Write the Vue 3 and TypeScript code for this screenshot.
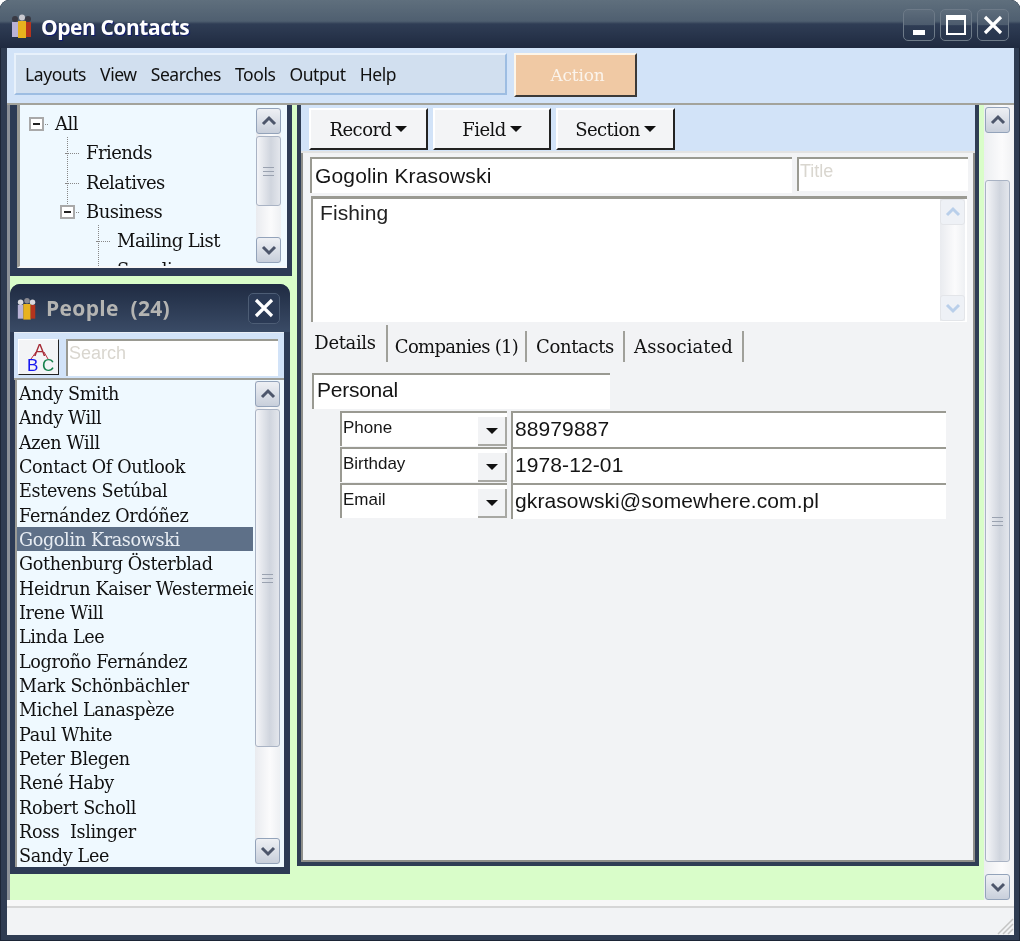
<script setup lang="ts">
interface TreeRow { label: string; depth: number; expander: boolean }
interface TabItem { label: string; width: number; spacing: number }
const tree: TreeRow[] = [
  { label: 'All', depth: 0, expander: true },
  { label: 'Friends', depth: 1, expander: false },
  { label: 'Relatives', depth: 1, expander: false },
  { label: 'Business', depth: 1, expander: true },
  { label: 'Mailing List', depth: 2, expander: false },
  { label: 'Suppliers', depth: 2, expander: false },
]
const people: string[] = [
  'Andy Smith', 'Andy Will', 'Azen Will', 'Contact Of Outlook', 'Estevens Setúbal',
  'Fernández Ordóñez', 'Gogolin Krasowski', 'Gothenburg Österblad', 'Heidrun Kaiser Westermeier',
  'Irene Will', 'Linda Lee', 'Logroño Fernández', 'Mark Schönbächler', 'Michel Lanaspèze',
  'Paul White', 'Peter Blegen', 'René Haby', 'Robert Scholl', 'Ross  Islinger', 'Sandy Lee',
]
const selected = 'Gogolin Krasowski'
const peopleTitle = 'People  (24)'
const menus: string[] = ['Layouts', 'View', 'Searches', 'Tools', 'Output', 'Help']
const tools: string[] = ['Record', 'Field', 'Section']
const tabs: TabItem[] = [
  { label: 'Details', width: 78, spacing: -0.35 },
  { label: 'Companies (1)', width: 137, spacing: -0.7 },
  { label: 'Contacts', width: 96, spacing: -0.35 },
  { label: 'Associated', width: 117, spacing: 0.05 },
]
const fields = [
  { type: 'Phone', value: '88979887' },
  { type: 'Birthday', value: '1978-12-01' },
  { type: 'Email', value: 'gkrasowski@somewhere.com.pl' },
]
</script>

<template>
  <div class="window">
    <header class="titlebar">
      <svg class="app-icon" width="24" height="26" viewBox="0 0 24 26">
        <circle cx="5" cy="5" r="3" fill="#3a3a44" /><circle cx="12" cy="3.5" r="3" fill="#c9c9d0" /><circle cx="18" cy="5" r="3" fill="#3a3a44" />
        <rect x="2" y="8" width="6" height="15" fill="#b9b3d6" />
        <rect x="8" y="7" width="8" height="17" fill="#e7b21e" />
        <rect x="16" y="8" width="5" height="15" fill="#b5341d" />
      </svg>
      <span class="app-title">Open Contacts</span>
      <div class="win-btns">
        <div class="win-btn"><span class="glyph-min"></span></div>
        <div class="win-btn"><span class="glyph-max"></span></div>
        <div class="win-btn">
          <svg width="22" height="22" viewBox="0 0 22 22"><path d="M3 3 19 19M19 3 3 19" stroke="#fff" stroke-width="3.2" /></svg>
        </div>
      </div>
    </header>

    <div class="menuband">
      <nav class="menubar"><span v-for="m in menus" :key="m">{{ m }}</span></nav>
      <div class="action">Action</div>
    </div>

    <div class="content">
      <aside class="left">
        <section class="tree-panel">
          <div class="tree-body">
            <div class="tree-list">
              <div class="vline vline-a"></div>
              <div class="vline vline-b"></div>
              <div
                v-for="r in tree"
                :key="r.label"
                class="tree-row"
                :style="{ paddingLeft: 35 + r.depth * 31 + 'px' }"
              >
                <span class="hdots" :style="{ left: 14 + r.depth * 31 + 'px' }"></span>
                <span v-if="r.expander" class="expander" :style="{ left: 9 + r.depth * 31 + 'px' }"></span>
                {{ r.label }}
              </div>
            </div>
            <div class="sb sb-tree">
              <div class="sb-btn"><svg width="18" height="12" viewBox="0 0 18 12"><path d="M3 9 9 3l6 6" class="chev" /></svg></div>
              <div class="sb-thumb thumb-tree"><i></i></div>
              <div class="sb-fill"></div>
              <div class="sb-btn"><svg width="18" height="12" viewBox="0 0 18 12"><path d="M3 3l6 6 6-6" class="chev" /></svg></div>
            </div>
          </div>
        </section>

        <section class="people-panel">
          <div class="people-head">
            <svg class="app-icon small" width="22" height="25" viewBox="0 0 24 26">
              <circle cx="5" cy="5" r="3" fill="#d9d9dd" /><circle cx="12" cy="3.5" r="3" fill="#8a8a90" /><circle cx="18" cy="5" r="3" fill="#d9d9dd" />
              <rect x="2" y="8" width="6" height="15" fill="#b9b3d6" />
              <rect x="8" y="7" width="8" height="17" fill="#e7b21e" />
              <rect x="16" y="8" width="5" height="15" fill="#b5341d" />
            </svg>
            <span class="people-title">{{ peopleTitle }}</span>
            <div class="people-close">
              <svg width="22" height="22" viewBox="0 0 22 22"><path d="M3 3 19 19M19 3 3 19" stroke="#fff" stroke-width="3.2" /></svg>
            </div>
          </div>
          <div class="people-tools">
            <div class="abc">
              <svg width="39" height="34" viewBox="0 0 39 34">
                <path d="M17 12 12 19M25 12 29 19" stroke="#b83040" fill="none" stroke-width="1" />
                <text x="15" y="16" class="abc-t" fill="#a52a35">A</text>
                <text x="8" y="31" class="abc-t" fill="#1515f0">B</text>
                <text x="23" y="31" class="abc-t" fill="#15804a">C</text>
              </svg>
            </div>
            <div class="input search">Search</div>
          </div>
          <div class="people-body">
            <ul class="people-list">
              <li v-for="p in people" :key="p" :class="{ sel: p === selected }">{{ p }}</li>
            </ul>
            <div class="sb sb-people">
              <div class="sb-btn"><svg width="18" height="12" viewBox="0 0 18 12"><path d="M3 9 9 3l6 6" class="chev" /></svg></div>
              <div class="sb-thumb thumb-people"><i></i></div>
              <div class="sb-fill"></div>
              <div class="sb-btn"><svg width="18" height="12" viewBox="0 0 18 12"><path d="M3 3l6 6 6-6" class="chev" /></svg></div>
            </div>
          </div>
        </section>
      </aside>

      <main class="main">
        <div class="toolbar">
          <button v-for="t in tools" :key="t" class="tool" type="button">{{ t }}<span class="caret"></span></button>
        </div>
        <div class="name-row">
          <div class="input name">Gogolin Krasowski</div>
          <div class="input title-in">Title</div>
        </div>
        <div class="notes">
          <div class="notes-text">Fishing</div>
          <div class="sb sb-notes">
            <div class="sb-btn pale"><svg width="18" height="12" viewBox="0 0 18 12"><path d="M3 9 9 3l6 6" class="chev pale-c" /></svg></div>
            <div class="sb-fill"></div>
            <div class="sb-btn pale"><svg width="18" height="12" viewBox="0 0 18 12"><path d="M3 3l6 6 6-6" class="chev pale-c" /></svg></div>
          </div>
        </div>
        <div class="tabs">
          <div
            v-for="(t, i) in tabs"
            :key="t.label"
            class="tab"
            :class="{ active: i === 0 }"
            :style="{ width: t.width + 'px', letterSpacing: t.spacing + 'px' }"
          >{{ t.label }}</div>
        </div>
        <div class="details">
          <div class="input section-in">Personal</div>
          <div v-for="f in fields" :key="f.type" class="field">
            <div class="select">
              <span class="select-text">{{ f.type }}</span>
              <span class="select-btn"><span class="caret dark"></span></span>
            </div>
            <div class="input value">{{ f.value }}</div>
          </div>
        </div>
      </main>

      <div class="sb sb-main">
        <div class="sb-btn"><svg width="18" height="12" viewBox="0 0 18 12"><path d="M3 9 9 3l6 6" class="chev" /></svg></div>
        <div class="sb-thumb thumb-main"><i></i></div>
        <div class="sb-btn"><svg width="18" height="12" viewBox="0 0 18 12"><path d="M3 3l6 6 6-6" class="chev" /></svg></div>
      </div>
    </div>

    <footer class="status">
      <svg class="grip" width="20" height="20" viewBox="0 0 20 20">
        <path d="M19 4 4 19M19 9 9 19M19 14 14 19" stroke="#c4c4c4" stroke-width="1.5" />
      </svg>
    </footer>
  </div>
</template>

<style>
html, body { margin: 0; background: #fff; }
</style>

<style scoped>
* { box-sizing: border-box; }
.window {
  width: 1020px; height: 941px; display: flex; flex-direction: column;
  background: #2f3c52; padding: 0 6px 6px 7px;
  border-radius: 9px 9px 0 0; overflow: hidden;
  box-shadow: inset 0 0 0 1px #1c2536;
  filter: blur(0.45px);
}
.titlebar {
  height: 48px; margin: 0 -6px 0 -7px; padding: 2px 11px 0 10px; display: flex; align-items: center;
  background: linear-gradient(#5f6f7d 0, #4f5f70 44%, #2f3d55 50%, #1f2a40 100%);
}
.app-icon { margin-top: 3px; }
.app-title {
  margin: 3px 0 0 7px; color: #fff; font: bold 21px "Open Sans", sans-serif; letter-spacing: -.45px;
  text-shadow: 1px 1px 1px #101a70;
}
.win-btns { margin-left: auto; display: flex; gap: 5px; }
.win-btn {
  width: 32px; height: 32px; border-radius: 5px; border: 1px solid #6d7a88;
  background: linear-gradient(#5d6c7b 0, #4c5b6d 50%, #2e3c54 52%, #28354c 100%);
  display: flex; align-items: center; justify-content: center; position: relative;
}
.glyph-min { width: 12px; height: 5px; background: #fff; margin: 14px 0 0 -1px; }
.glyph-max { width: 20px; height: 20px; border: 2px solid #fff; border-top-width: 5px; }

.menuband {
  height: 57px; background: #d2e3f8; border-bottom: 2px solid #a3a39b;
  display: flex; align-items: flex-start; padding: 5px 0 0 7px; gap: 7px;
}
.menubar {
  width: 493px; height: 42px; display: flex; align-items: center; gap: 14px; padding: 0 0 0 9px;
  background: #d1dfef; border: 2px solid; border-color: #e8f1fb #9dbde2 #9dbde2 #e8f1fb;
  font: 17.5px "Noto Sans", sans-serif; letter-spacing: -.42px; color: #111;
}
.action {
  width: 123px; height: 44px; display: flex; align-items: center; justify-content: center; padding-left: 4px;
  background: #f0c9a4; border: 2px solid; border-color: #fdf6ea #3c3a38 #3c3a38 #fdf6ea;
  color: #fbf4ec; font: 17px "DejaVu Serif", serif; letter-spacing: -.2px;
}

.content {
  flex: 1; min-height: 0; background: #d9fdc9; display: flex; align-items: stretch;
  border-left: 3px solid #8b9098;
}
.left { width: 282px; flex: none; display: flex; flex-direction: column; gap: 8px; }

.tree-panel {
  height: 171px; background: #2d3b55; padding: 0 5px 8px 7px; width: 282px;
}
.tree-body {
  height: 163px; background: #eff9ff; border-left: 3px solid #9a9a95; display: flex; padding-right: 6px;
  border-bottom: 2px solid #f8f8f8;
}
.tree-list { flex: 1; position: relative; overflow: hidden; padding-top: 4px; }
.tree-row {
  height: 29.3px; font: 18px/29px "DejaVu Serif", serif; letter-spacing: -.55px;
  color: #111; position: relative; white-space: nowrap;
}
.hdots { position: absolute; top: 15px; width: 14px; border-top: 1px dotted #888; }
.expander {
  position: absolute; top: 8px; width: 15px; height: 14px; background: #fff; border: 2px solid #a9a9a9;
}
.expander::after { content: ""; position: absolute; left: 2px; right: 2px; top: 4px; height: 2px; background: #222; }
.vline { position: absolute; border-left: 1px dotted #888; }
.vline-a { left: 47px; top: 32px; height: 69px; }
.vline-b { left: 78px; top: 120px; height: 45px; }

.sb {
  width: 25px; flex: none; display: flex; flex-direction: column; gap: 2px;
  background: linear-gradient(90deg, #e9ebef, #fbfbfc 60%, #eef0f3);
}
.sb-btn {
  height: 26px; flex: none; border: 1px solid #93a3ba; border-radius: 3px;
  background: linear-gradient(#eef0f4, #c8cfdb); display: flex; align-items: center; justify-content: center;
}
.chev { fill: none; stroke: #4d566b; stroke-width: 3; }
.sb-thumb {
  flex: none; border: 1px solid #a9b3c4; border-radius: 3px;
  background: linear-gradient(90deg, #f4f5f8, #d0d5de 60%, #e3e6ec); display: flex; align-items: center; justify-content: center;
}
.sb-thumb i { width: 11px; height: 9px; border-top: 1px solid #9aa2b0; border-bottom: 1px solid #9aa2b0; position: relative; }
.sb-thumb i::after { content: ""; position: absolute; left: 0; right: 0; top: 3px; border-top: 1px solid #9aa2b0; }
.sb-fill { flex: 1; }
.sb-tree { margin: 3px 0; }
.thumb-tree { height: 70px; }
.thumb-people { height: 338px; }

.people-panel {
  width: 280px; height: 590px; background: #2d3b55; border-radius: 10px 10px 0 0; padding: 0 6px 7px 4px;
  display: flex; flex-direction: column;
}
.people-head {
  height: 48px; flex: none; display: flex; align-items: center;
  background: linear-gradient(#1f2b42, #3a4b66);
  margin: 0 -6px 0 -4px; padding: 4px 10px 4px 6px; border-radius: 10px 10px 0 0;
}
.people-title { margin: 0 0 0 8px; color: #b4b4b2; font: bold 21px "Open Sans", sans-serif; white-space: pre; letter-spacing: .35px; }
.people-close {
  margin-left: auto; width: 32px; height: 31px; border: 1px solid #4d5d75; border-radius: 5px; background: #2b3a55;
  display: flex; align-items: center; justify-content: center;
}
.people-tools {
  height: 48px; flex: none; background: #d2e3f8; display: flex; align-items: flex-start; gap: 7px; padding: 6px 4px 0 4px;
  border-bottom: 2px solid #9f9f98; border-top: 1px solid #e8eef6;
}
.abc {
  width: 41px; height: 36px; background: #f3f4f6; border: 1px solid; border-color: #fff #222 #222 #fff;
  flex: none; overflow: hidden;
}
.abc-t { font: 17px "Liberation Sans", sans-serif; }
.input {
  background: #fff; border-top: 2px solid #9a9a92; border-left: 2px solid #9a9a92; padding-left: 3px; white-space: nowrap;
  font-family: "Liberation Sans", sans-serif; color: #151515;
}
.search { width: 212px; height: 37px; color: #d9d6cf; font-size: 18px; line-height: 25px; padding-left: 1px; }
.people-body { flex: 1; min-height: 0; display: flex; background: #eff9ff; margin-left: 1px; border-left: 2px solid #9a9a95; overflow: hidden; padding-right: 4px; }
.people-list {
  flex: 1; min-width: 0; list-style: none; margin: 0; padding: 1px 2px 0 0; overflow: hidden;
  font: 17.6px/26px "DejaVu Serif", serif; letter-spacing: -.35px; color: #111;
}
.people-list li { height: 24.33px; white-space: pre; overflow: hidden; padding-left: 2px; }
.people-list li.sel { background: #5e7088; color: #e8edf3; }
.sb-people { margin: 1px 0 3px; }

.main {
  width: 682px; height: 761px; margin-left: 5px; background: #f2f3f5; border: 4px solid #2f3d54; border-top: 0;
  box-shadow: inset 0 0 0 2px #8f8f8a; padding: 0 2px; display: flex; flex-direction: column;
}
.toolbar {
  height: 48px; flex: none; margin: 0 -2px; padding: 3px 0 0 8px; background: #d2e3f8; display: flex; gap: 5px; align-items: flex-start;
  border-bottom: 2px solid #e3e3e3;
}
.tool {
  height: 42px; width: 119px; padding: 0; background: #f3f4f6; color: #111; border: 2px solid; border-color: #fff #222 #222 #fff;
  font: 18px "DejaVu Serif", serif; letter-spacing: -.55px; display: flex; align-items: center; justify-content: center; gap: 4px;
}
.tool:nth-child(2) { width: 118px; }
.caret { width: 0; height: 0; border: 6px solid transparent; border-top-color: #111; border-bottom: 0; display: inline-block; }
.name-row { display: flex; gap: 5px; padding: 4px 0 0 7px; height: 43px; flex: none; }
.name { width: 482px; height: 36px; font-size: 21px; line-height: 34px; letter-spacing: .15px; }
.title-in { width: 171px; height: 34px; font-size: 18px; line-height: 25px; color: #d9d6cf; padding-left: 1px; }
.notes { width: 656px; height: 126px; flex: none; margin-left: 8px; background: #fff; border-top: 3px solid #9a9a92; border-left: 2px solid #9a9a92; display: flex; }
.notes-text { flex: 1; padding: 2px 0 0 7px; font: 21px "Liberation Sans", sans-serif; letter-spacing: .1px; color: #222; }
.sb-notes { margin: 0 2px 0 0; padding: 0; gap: 0; height: 122px; }
.sb-btn.pale { background: #eef1f6; border-color: #e3e5e9; }
.chev.pale-c { stroke: #b9cfea; }
.tabs { display: flex; height: 44px; flex: none; gap: 2px; padding: 9px 0 0 7px; }
.tab {
  padding: 5px 2px 0 0; height: 31px; text-align: center; font: 18px "DejaVu Serif", serif; color: #111;
  border-right: 2px solid #a0a09a; background: #f2f3f5; white-space: nowrap;
}
.tab.active { padding-top: 7px; height: 37px; margin-top: -6px; padding-right: 6px; }
.details { padding: 7px 0 0 9px; }
.section-in { width: 298px; height: 36px; font-size: 21px; line-height: 30px; letter-spacing: -.25px; margin-bottom: 2px; }
.field { display: flex; gap: 4px; margin-left: 28px; height: 36px; }
.select {
  width: 167px; height: 35px; background: #fff; border-top: 2px solid #9a9a92; border-left: 2px solid #9a9a92; display: flex; justify-content: space-between;
  font: 17px "Liberation Sans", sans-serif; color: #151515;
}
.select-text { padding: 5px 0 0 1px; }
.select-btn { width: 29px; background: #f2f3f5; border-right: 2px solid #a8a8a3; border-bottom: 2px solid #a8a8a3; margin: 4px 0 0; display: flex; align-items: center; justify-content: center; }
.value { width: 435px; height: 36px; font-size: 21px; line-height: 31px; letter-spacing: .1px; padding-left: 2px; }

.sb-main { width: 30px; margin-left: 5px; padding: 2px 4px 0 1px; gap: 0; background: linear-gradient(90deg, #eceef1, #fbfbfc 60%, #f0f1f3); }
.thumb-main { height: 682px; margin: 47px 0 12px; }

.status {
  height: 35px; flex: none; background: #f2f3f5; position: relative;
  border-top: 6px solid #f7f7f7; box-shadow: inset 0 2px 0 #d6d6d6;
}
.grip { position: absolute; right: 0; bottom: 0; }
</style>
